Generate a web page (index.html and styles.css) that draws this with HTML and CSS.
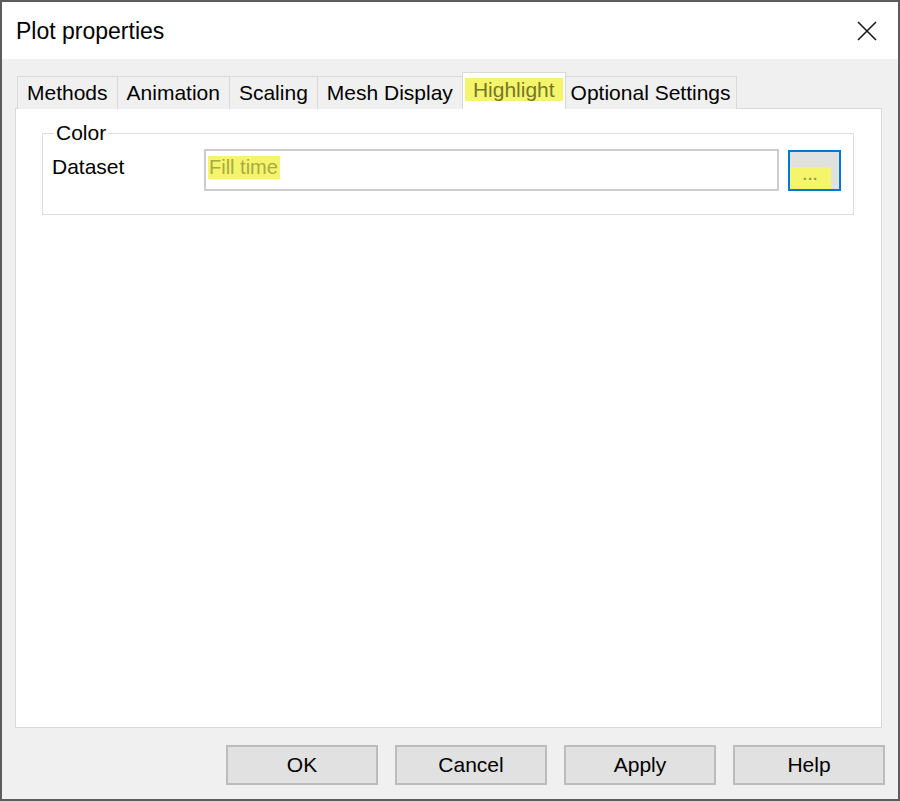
FILE: index.html
```html
<!DOCTYPE html>
<html lang="en">

<head>
  <meta charset="UTF-8">
  <meta name="viewport" content="width=device-width, initial-scale=1.0">
  <title>Plot properties</title>
  <link rel="stylesheet" href="styles.css">
</head>

<body>
  <div class="window">
    <!-- Title Bar -->
    <div class="title-bar">
      <span class="title">Plot properties</span>
      <button class="close" aria-label="Close">
        <svg width="20" height="20" viewBox="0 0 20 20">
          <path d="M1 1 L19 19 M19 1 L1 19" stroke="#1a1a1a" stroke-width="1.6" fill="none" />
        </svg>
      </button>
    </div>

    <div class="dialog-body">
      <!-- Tabs -->
      <div class="tabs">
        <div class="tab">Methods</div>
        <div class="tab">Animation</div>
        <div class="tab">Scaling</div>
        <div class="tab">Mesh Display</div>
        <div class="tab active"><span class="marker">Highlight</span></div>
        <div class="tab">Optional Settings</div>
      </div>

      <!-- Tab Panel -->
      <div class="panel">
        <fieldset class="group">
          <legend>Color</legend>
          <div class="field-row">
            <label for="dataset">Dataset</label>
            <div class="textbox" id="dataset"><span class="marker">Fill time</span></div>
            <button class="browse"><span class="marker">...</span></button>
          </div>
        </fieldset>
      </div>

      <!-- Dialog Buttons -->
      <div class="buttons">
        <button class="btn">OK</button>
        <button class="btn">Cancel</button>
        <button class="btn">Apply</button>
        <button class="btn">Help</button>
      </div>
    </div>
  </div>
</body>

</html>
```

FILE: styles.css
```css
/* Base */
* {
  box-sizing: border-box;
}

body {
  margin: 0;
  font-family: "Liberation Sans", Arial, sans-serif;
  color: #000000;
  background-color: #ffffff;
}

.window {
  width: 900px;
  height: 801px;
  border: 2px solid #5c5c5c;
  display: flex;
  flex-direction: column;
}

/* Title Bar */
.title-bar {
  height: 57px;
  background-color: #ffffff;
  display: flex;
  align-items: center;
  justify-content: space-between;
  padding: 2px 21px 0 14px;
}

.title {
  font-size: 23px;
}

.close {
  border: none;
  background: none;
  padding: 0;
  width: 20px;
  height: 20px;
  margin-bottom: 2px;
}

.close svg {
  display: block;
}

/* Dialog Body */
.dialog-body {
  flex: 1;
  background-color: #f0f0f0;
  display: flex;
  flex-direction: column;
  padding: 13px 16px 14px 13px;
}

/* Tabs */
.tabs {
  display: flex;
  align-items: flex-end;
  padding-left: 2px;
  position: relative;
  z-index: 1;
  margin-bottom: -1px;
}

.tab {
  height: 33px;
  line-height: 31px;
  font-size: 21px;
  padding: 0 9px;
  border: 1px solid #d9d9d9;
  border-bottom: none;
  margin-left: -1px;
  background-color: #f0f0f0;
  white-space: nowrap;
}

.tab:first-child {
  margin-left: 0;
}

.tab:last-child {
  padding: 0 5px;
}

.tab.active {
  height: 37px;
  line-height: 33px;
  padding: 0 2px;
  background-color: #ffffff;
}

.tab.active .marker {
  display: inline-block;
  line-height: 23px;
  padding: 0 8px;
  color: #77772a;
}

.marker {
  background-color: #f5f56c;
}

/* Panel */
.panel {
  flex: 1;
  background-color: #ffffff;
  border: 1px solid #d9d9d9;
  padding: 12px 27px 0 26px;
}

.group {
  margin: 0;
  border: 1px solid #dcdcdc;
  padding: 4px 12px 23px 9px;
}

.group legend {
  font-size: 21px;
  line-height: 24px;
  padding: 0 2px;
  margin-left: 2px;
}

.field-row {
  display: flex;
  align-items: flex-start;
}

.field-row label {
  font-size: 21px;
  line-height: 36px;
  width: 152px;
}

.textbox {
  flex: 1;
  height: 42px;
  border: 2px solid #cccccc;
  padding: 5px 0 0 2px;
  font-size: 20px;
  line-height: 23px;
}

.textbox .marker {
  display: inline-block;
  color: #aaaa44;
  padding: 0 2px 0 1px;
}

.browse {
  width: 53px;
  height: 41px;
  margin-left: 9px;
  margin-top: 1px;
  padding: 0;
  border: 2px solid #0078d7;
  background-color: #e1e1e1;
  display: flex;
  align-items: flex-end;
  justify-content: flex-start;
}

.browse .marker {
  width: 41px;
  height: 22px;
  line-height: 16px;
  font-size: 15px;
  font-weight: bold;
  letter-spacing: 1px;
  color: #9a9a48;
  text-align: center;
}

/* Dialog Buttons */
.buttons {
  display: flex;
  justify-content: flex-end;
  gap: 17px;
  margin-top: 17px;
  margin-right: -3px;
}

.btn {
  width: 152px;
  height: 40px;
  border: 2px solid #bcbcbc;
  background-color: #e1e1e1;
  font-family: "Liberation Sans", Arial, sans-serif;
  font-size: 21px;
  color: #000000;
  padding: 0;
}
```
